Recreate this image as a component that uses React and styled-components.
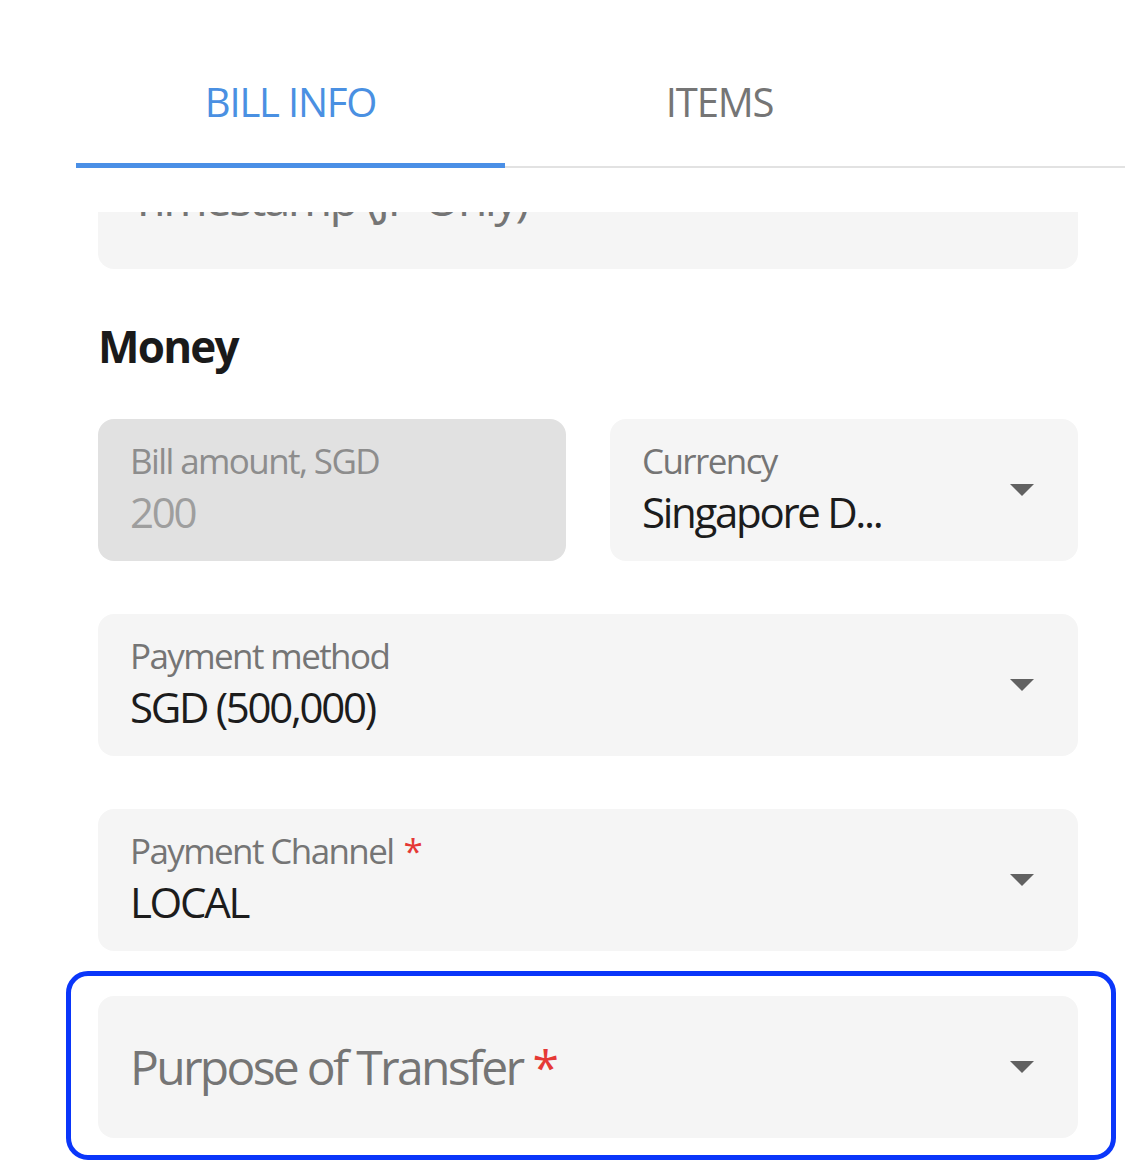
import React from 'react';
import styled, { createGlobalStyle } from 'styled-components';

const GlobalStyle = createGlobalStyle`
  html, body {
    margin: 0;
    padding: 0;
    background: #fff;
    font-family: "Open Sans", "Noto Sans", sans-serif;
  }
`;

const Page = styled.div`
  width: 1125px;
  height: 1164px;
  overflow: hidden;
`;

const TabBar = styled.div`
  display: flex;
  margin-left: 76px;
  border-bottom: 2px solid #e2e2e2;
`;

const Tab = styled.div`
  width: 429px;
  height: 168px;
  box-sizing: border-box;
  display: flex;
  align-items: flex-end;
  justify-content: center;
  padding-bottom: 37px;
  font-size: 40px;
  line-height: 48px;
  letter-spacing: -1.2px;
  color: ${(p) => (p.active ? '#4a90e2' : '#757575')};
  border-bottom: 5px solid ${(p) => (p.active ? '#4a8fe6' : 'transparent')};
  margin-bottom: -2px;
`;

const Viewport = styled.div`
  margin-top: 44px;
  height: 952px;
  overflow: hidden;
`;

const Content = styled.div`
  width: 980px;
  margin-left: 98px;
  margin-top: -85px;
  display: flex;
  flex-direction: column;
`;

const Card = styled.div`
  height: 142px;
  box-sizing: border-box;
  border-radius: 16px;
  background: ${(p) => (p.disabled ? '#e1e1e1' : '#f5f5f5')};
  display: flex;
  align-items: center;
  padding: 0 44px 0 32px;
`;

const Fields = styled.div`
  flex: 1;
  display: flex;
  flex-direction: column;
  min-width: 0;
`;

const Label = styled.div`
  font-size: 35px;
  line-height: 44px;
  letter-spacing: -1.6px;
  color: ${(p) => (p.disabled ? '#8d8d8d' : '#757575')};
`;

const Value = styled.div`
  font-size: 42px;
  line-height: 58px;
  letter-spacing: -2.3px;
  color: ${(p) => (p.disabled ? '#9e9e9e' : '#1c1c1c')};
  white-space: nowrap;
`;

const Placeholder = styled.div`
  font-size: 48px;
  line-height: 60px;
  letter-spacing: -2.7px;
  color: #757575;
`;

const Star = styled.span`
  color: #e53935;
  margin-left: 10px;
`;

const Arrow = styled.div`
  width: 0;
  height: 0;
  border-left: 12px solid transparent;
  border-right: 12px solid transparent;
  border-top: 12px solid #616161;
  flex-shrink: 0;
`;

const Heading = styled.h2`
  margin: 50px 0 46px;
  font-size: 44px;
  line-height: 54px;
  font-weight: 700;
  letter-spacing: -1.8px;
  color: #1a1a1a;
`;

const Row = styled.div`
  display: grid;
  grid-template-columns: 1fr 1fr;
  gap: 44px;
`;

const Stack = styled.div`
  display: flex;
  flex-direction: column;
  gap: 53px;
`;

const Highlight = styled.div`
  margin: -33px -38px 0 -32px;
  padding: 20px 33px 17px 27px;
  border: 5px solid #0a36fa;
  border-radius: 22px;
`;

const Select = ({ label, value, required }) => (
  <Card>
    <Fields>
      <Label>
        {label}
        {required && <Star>*</Star>}
      </Label>
      <Value>{value}</Value>
    </Fields>
    <Arrow />
  </Card>
);

const App = () => (
  <Page>
    <GlobalStyle />
    <TabBar>
      <Tab active>BILL INFO</Tab>
      <Tab>ITEMS</Tab>
    </TabBar>
    <Viewport>
      <Content>
        <Card>
          <Placeholder>Timestamp (JP Only)</Placeholder>
        </Card>
        <Heading>Money</Heading>
        <Stack>
          <Row>
            <Card disabled>
              <Fields>
                <Label disabled>Bill amount, SGD</Label>
                <Value disabled>200</Value>
              </Fields>
            </Card>
            <Select label="Currency" value="Singapore D..." />
          </Row>
          <Select label="Payment method" value="SGD (500,000)" />
          <Select label="Payment Channel" value="LOCAL" required />
          <Highlight>
            <Card>
              <Fields>
                <Placeholder>
                  Purpose of Transfer<Star>*</Star>
                </Placeholder>
              </Fields>
              <Arrow />
            </Card>
          </Highlight>
        </Stack>
      </Content>
    </Viewport>
  </Page>
);

export default App;
